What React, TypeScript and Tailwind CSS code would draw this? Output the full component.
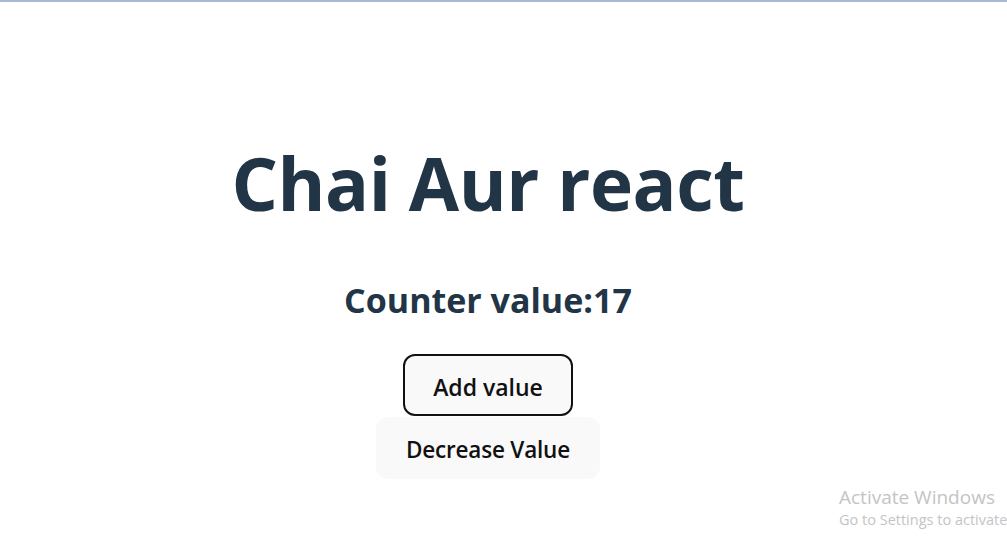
import React from "react";

export default function App() {
  return (
    <div
      className="relative w-[1007px] h-[554px] overflow-hidden bg-white border-t-2 border-[#a9b9d3]"
      style={{ fontFamily: '"Open Sans", "Noto Sans", sans-serif' }}
    >
      <div className="flex flex-col items-center pr-[31px] pt-[137px]">
        <h1 className="text-[73px] leading-[88px] font-bold text-[#213547] tracking-[-0.5px]">
          Chai Aur react
        </h1>
        <h2 className="mt-[51px] text-[34px] leading-[44px] font-bold text-[#213547]">
          Counter value:17
        </h2>
        <div className="mt-[32px] flex flex-col items-center gap-[1px]">
          <button className="h-[62px] px-[28px] pt-[4px] rounded-[12px] border-2 border-[#111111] bg-[#f9f9f9] text-[23px] font-semibold text-[#111111]">
            Add value
          </button>
          <button className="h-[62px] px-[28px] pt-[4px] rounded-[12px] border-2 border-transparent bg-[#f9f9f9] text-[22.5px] font-semibold text-[#111111] tracking-[-0.2px]">
            Decrease Value
          </button>
        </div>
      </div>
      <div className="absolute left-[839px] top-[486px] whitespace-nowrap text-[#c4c4c4] leading-none">
        <div className="text-[19px]">Activate Windows</div>
        <div className="mt-[6px] text-[14.5px]">Go to Settings to activate</div>
      </div>
    </div>
  );
}
